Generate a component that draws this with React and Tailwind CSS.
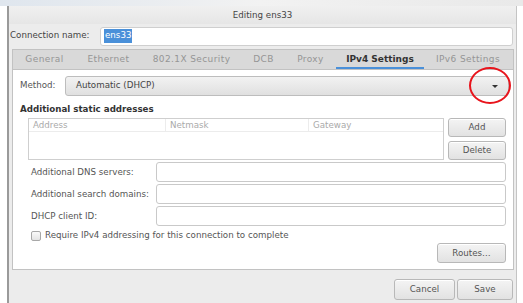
import React from "react";

const tabs = [
  { label: "General", w: "w-[63px]" },
  { label: "Ethernet", w: "w-[65px]" },
  { label: "802.1X Security", w: "w-[101px]" },
  { label: "DCB", w: "w-[43px]" },
  { label: "Proxy", w: "w-[51px]" },
  { label: "IPv4 Settings", w: "w-[88px]", active: true },
  { label: "IPv6 Settings", w: "w-[88px]" },
];

function Button({ children, className = "" }) {
  return (
    <div
      className={`flex items-center justify-center rounded-[3px] border border-[#b8b8b8] bg-gradient-to-b from-[#f4f4f4] to-[#e2e2e2] text-[#555] shadow-[0_1px_0_#fff_inset] ${className}`}
    >
      {children}
    </div>
  );
}

function Field({ label }) {
  return (
    <div className="flex items-center">
      <span className="w-[143px] whitespace-nowrap pl-[18px] text-[#555]">{label}</span>
      <div className="h-[20px] w-[350px] rounded-[3px] border border-[#c9c9c9] bg-white" />
    </div>
  );
}

export default function App() {
  return (
    <div
      className="relative h-[303px] w-[523px] overflow-hidden bg-white text-[8.7px] text-[#333]"
      style={{ fontFamily: '"DejaVu Sans", sans-serif' }}
    >
      {/* desktop strip behind the dialog */}
      <div className="h-[6px] w-full bg-gradient-to-r from-[#dfe6ee] via-[#f2f2f2] to-[#e9e9e9]" />

      <div className="ml-[7px] flex h-[297px] w-[510px] flex-col border-l-2 border-r border-l-[#9a9a9a] border-r-[#c4c4c4] bg-[#ececec]">
        {/* title bar */}
        <div className="flex h-[18px] items-center justify-center bg-gradient-to-b from-[#f0f0f0] to-[#e6e6e6] pt-[1px] text-[#444]">
          Editing ens33
        </div>

        {/* connection name */}
        <div className="flex h-[24px] items-center pl-[1px] pr-[3px]">
          <span className="text-[#444]">Connection name:</span>
          <div className="ml-auto flex h-[19px] w-[413px] items-center rounded-[3px] border border-[#cfcfcf] bg-white pl-[3px]">
            <span className="bg-[#4a90d9] px-[1px] text-white">ens33</span>
          </div>
        </div>

        {/* notebook */}
        <div className="ml-[3px] mt-[1px] w-[502px] border border-[#c2c2c2]">
          <div className="flex h-[20px] items-stretch border-b border-[#c2c2c2] bg-[#d9d9d9] text-[9px]">
            {tabs.map((t) => (
              <div
                key={t.label}
                className={`flex items-center justify-center ${t.w} ${
                  t.active
                    ? "border-b-2 border-[#4a90d9] pt-[2px] font-bold text-[#333]"
                    : "tracking-[0.4px] text-[#959595]"
                }`}
              >
                {t.label}
              </div>
            ))}
          </div>

          <div className="h-[199px] bg-white pt-[6px]">
            {/* method */}
            <div className="flex items-center pl-[7px] pr-[4px]">
              <span className="text-[#555]">Method:</span>
              <div className="relative ml-auto flex h-[20px] w-[444px] items-center rounded-[3px] border border-[#bdbdbd] bg-gradient-to-b from-[#f2f2f2] to-[#e0e0e0] pl-[10px] text-[#444]">
                Automatic (DHCP)
                <svg className="absolute right-[10px] top-[8px]" width="6" height="3" viewBox="0 0 6 3">
                  <path d="M0 0h6L3 3z" fill="#333" />
                </svg>
                <div className="absolute -right-[3px] -top-[10px] h-[37px] w-[42px] rounded-[50%] border-2 border-[#e8141c]" />
              </div>
            </div>

            <div className="mt-[7px] pl-[7px] font-bold text-[#333]">Additional static addresses</div>

            {/* addresses table + buttons */}
            <div className="mt-[2px] flex pl-[15px]">
              <div className="h-[42px] w-[416px] border border-[#cfcfcf]">
                <div className="grid h-[13px] grid-cols-[136px_143px_1fr] border-b border-[#ececec] text-[#aaa]">
                  <span className="pl-[4px] leading-[13px]">Address</span>
                  <span className="border-l border-[#ececec] pl-[4px] leading-[13px]">Netmask</span>
                  <span className="border-l border-[#ececec] pl-[4px] leading-[13px]">Gateway</span>
                </div>
              </div>
              <div className="ml-[4px] flex flex-col gap-[4px]">
                <Button className="h-[19px] w-[58px]">Add</Button>
                <Button className="h-[19px] w-[58px]">Delete</Button>
              </div>
            </div>

            <div className="mt-[2px] flex flex-col gap-[2px]">
              <Field label="Additional DNS servers:" />
              <Field label="Additional search domains:" />
              <Field label="DHCP client ID:" />
            </div>

            <div className="mt-[3px] flex items-center pl-[18px] text-[#555]">
              <div className="mr-[4px] h-[10px] w-[10px] rounded-[2px] border border-[#a8a8a8] bg-gradient-to-b from-[#fafafa] to-[#e4e4e4]" />
              Require IPv4 addressing for this connection to complete
            </div>

            <div className="mt-[1px] flex justify-end pr-[7px]">
              <Button className="h-[20px] w-[69px]">Routes…</Button>
            </div>
          </div>
        </div>

        {/* dialog buttons */}
        <div className="mt-[9px] flex justify-end gap-[2px] pr-[3px]">
          <Button className="h-[21px] w-[61px]">Cancel</Button>
          <Button className="h-[21px] w-[56px]">Save</Button>
        </div>
      </div>
    </div>
  );
}
